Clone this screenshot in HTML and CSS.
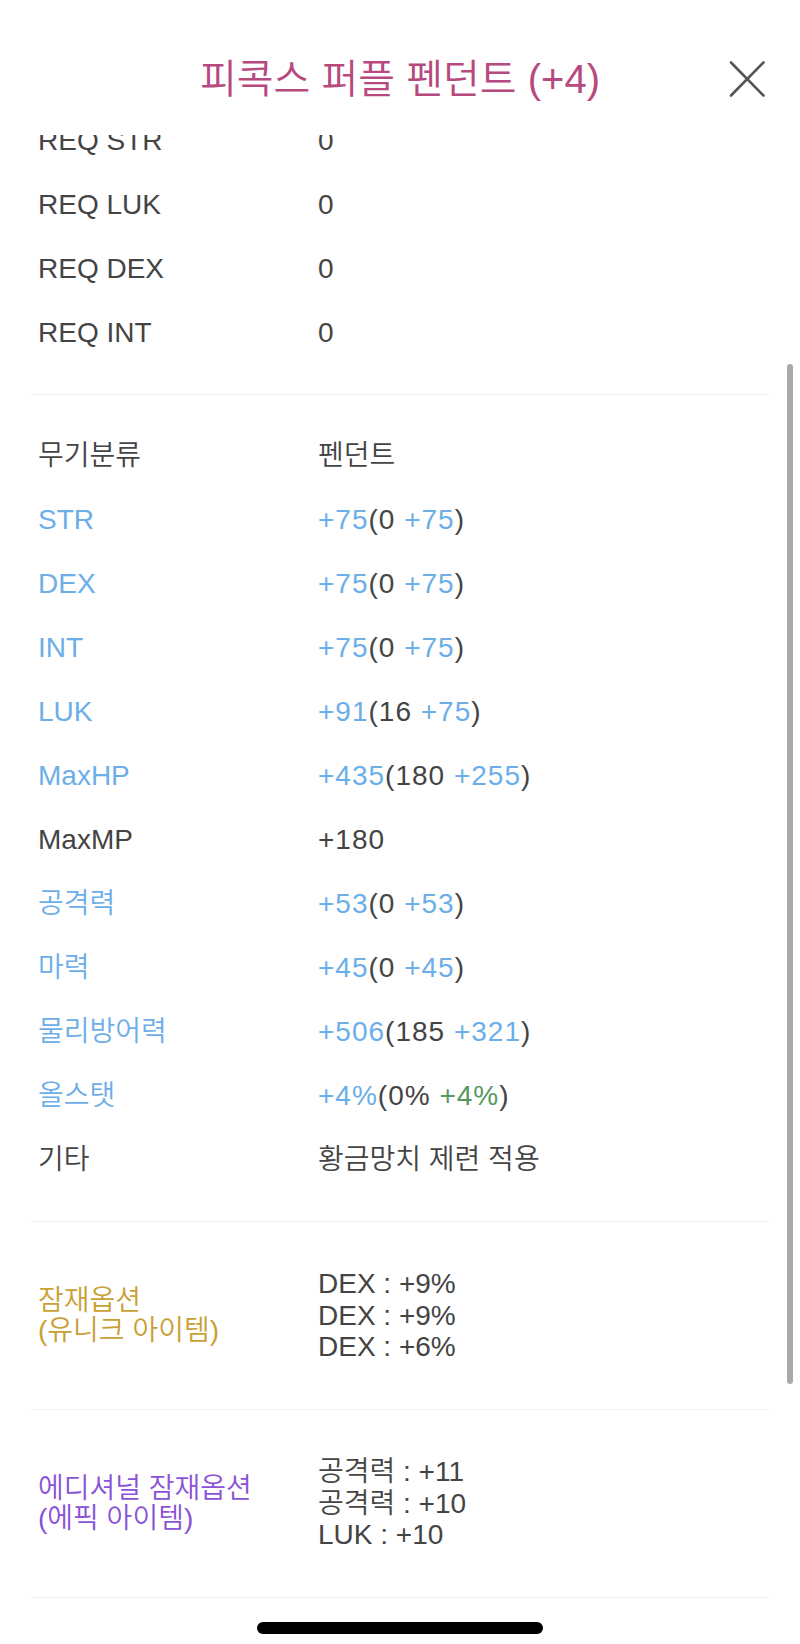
FILE: index.html
```html
<!DOCTYPE html>
<html lang="ko">
<head>
<meta charset="utf-8">
<title>피콕스 퍼플 펜던트 (+4)</title>
<link rel="stylesheet" href="styles.css">
</head>
<body>
<div class="screen">
  <header class="header">
    <div class="spacer"></div>
    <h1 class="title">피콕스 퍼플 펜던트 (+4)</h1>
    <button class="close" aria-label="닫기">
      <svg width="36" height="36" viewBox="0 0 36 36"><path d="M2 1.5 L34.5 34.5 M34.5 1.5 L2 34.5" stroke="#555" stroke-width="2.6" stroke-linecap="round" fill="none"/></svg>
    </button>
  </header>
  <main class="viewport">
    <div class="content">
      <section class="section">
        <div class="row"><span class="label">REQ STR</span><span class="value num">0</span></div>
        <div class="row"><span class="label">REQ LUK</span><span class="value num">0</span></div>
        <div class="row"><span class="label">REQ DEX</span><span class="value num">0</span></div>
        <div class="row"><span class="label">REQ INT</span><span class="value num">0</span></div>
      </section>
      <section class="section">
        <div class="row"><span class="label">무기분류</span><span class="value">펜던트</span></div>
        <div class="row"><span class="label blue">STR</span><span class="value num"><span class="blue">+75</span>(0 <span class="blue">+75</span>)</span></div>
        <div class="row"><span class="label blue">DEX</span><span class="value num"><span class="blue">+75</span>(0 <span class="blue">+75</span>)</span></div>
        <div class="row"><span class="label blue">INT</span><span class="value num"><span class="blue">+75</span>(0 <span class="blue">+75</span>)</span></div>
        <div class="row"><span class="label blue">LUK</span><span class="value num"><span class="blue">+91</span>(16 <span class="blue">+75</span>)</span></div>
        <div class="row"><span class="label blue">MaxHP</span><span class="value num"><span class="blue">+435</span>(180 <span class="blue">+255</span>)</span></div>
        <div class="row"><span class="label">MaxMP</span><span class="value num">+180</span></div>
        <div class="row"><span class="label blue">공격력</span><span class="value num"><span class="blue">+53</span>(0 <span class="blue">+53</span>)</span></div>
        <div class="row"><span class="label blue">마력</span><span class="value num"><span class="blue">+45</span>(0 <span class="blue">+45</span>)</span></div>
        <div class="row"><span class="label blue">물리방어력</span><span class="value num"><span class="blue">+506</span>(185 <span class="blue">+321</span>)</span></div>
        <div class="row"><span class="label blue">올스탯</span><span class="value num"><span class="blue">+4%</span>(0% <span class="green">+4%</span>)</span></div>
        <div class="row"><span class="label">기타</span><span class="value">황금망치 제련 적용</span></div>
      </section>
      <section class="section section-multi">
        <div class="row-multi">
          <span class="label-multi gold">잠재옵션<br>(유니크 아이템)</span>
          <span class="value-multi">DEX : +9%<br>DEX : +9%<br>DEX : +6%</span>
        </div>
      </section>
      <section class="section section-multi">
        <div class="row-multi">
          <span class="label-multi purple">에디셔널 잠재옵션<br>(에픽 아이템)</span>
          <span class="value-multi">공격력 : +11<br>공격력 : +10<br>LUK : +10</span>
        </div>
      </section>
    </div>
  </main>
  <div class="scrollbar"></div>
  <div class="home-indicator"></div>
</div>
</body>
</html>
```

FILE: styles.css
```css
* {
  box-sizing: border-box;
}

html, body {
  margin: 0;
  padding: 0;
  background: #ffffff;
}

body {
  font-family: "Liberation Sans", "Noto Sans CJK KR", sans-serif;
  font-weight: 350;
  color: #444444;
}

.screen {
  position: relative;
  width: 800px;
  height: 1644px;
  overflow: hidden;
  background: #ffffff;
}

.header {
  display: grid;
  grid-template-columns: 1fr auto 1fr;
  align-items: center;
  height: 135px;
  padding-top: 56px;
  padding-bottom: 56px;
  background: #ffffff;
  position: relative;
  z-index: 2;
}

.title {
  margin: 0;
  font-size: 40px;
  font-weight: 350;
  line-height: 46px;
  color: #b7497e;
  white-space: nowrap;
}

.close {
  justify-self: end;
  margin-right: 35px;
  padding: 0;
  border: 0;
  background: transparent;
  width: 36px;
  height: 36px;
  display: flex;
}

.viewport {
  height: 1509px;
  overflow: hidden;
}

.content {
  margin-top: -55px;
}

.section {
  margin: 0 30px;
  padding: 29px 0;
  border-bottom: 1px solid #f0f0f0;
}

.row {
  display: grid;
  grid-template-columns: 280px 1fr;
  align-items: center;
  height: 64px;
  padding: 0 8px;
  font-size: 28px;
  line-height: 32px;
  white-space: nowrap;
}

.num {
  letter-spacing: 1px;
}

.section-multi {
  padding: 46px 0;
  min-height: 188px;
  display: flex;
  align-items: center;
}

.row-multi {
  display: grid;
  grid-template-columns: 280px 1fr;
  align-items: center;
  width: 100%;
  padding: 0 8px;
  font-size: 28px;
  white-space: nowrap;
}

.label-multi {
  line-height: 30px;
}

.value-multi {
  line-height: 31.5px;
}

.blue {
  color: #6caee8;
}

.green {
  color: #569860;
}

.gold {
  color: #c9a035;
}

.purple {
  color: #8a52d8;
}

.scrollbar {
  position: absolute;
  left: 787px;
  top: 364px;
  width: 6px;
  height: 1020px;
  border-radius: 3px;
  background: #a9a9a9;
}

.home-indicator {
  position: absolute;
  left: 257px;
  top: 1622px;
  width: 286px;
  height: 12px;
  border-radius: 6px;
  background: #000000;
}
```
